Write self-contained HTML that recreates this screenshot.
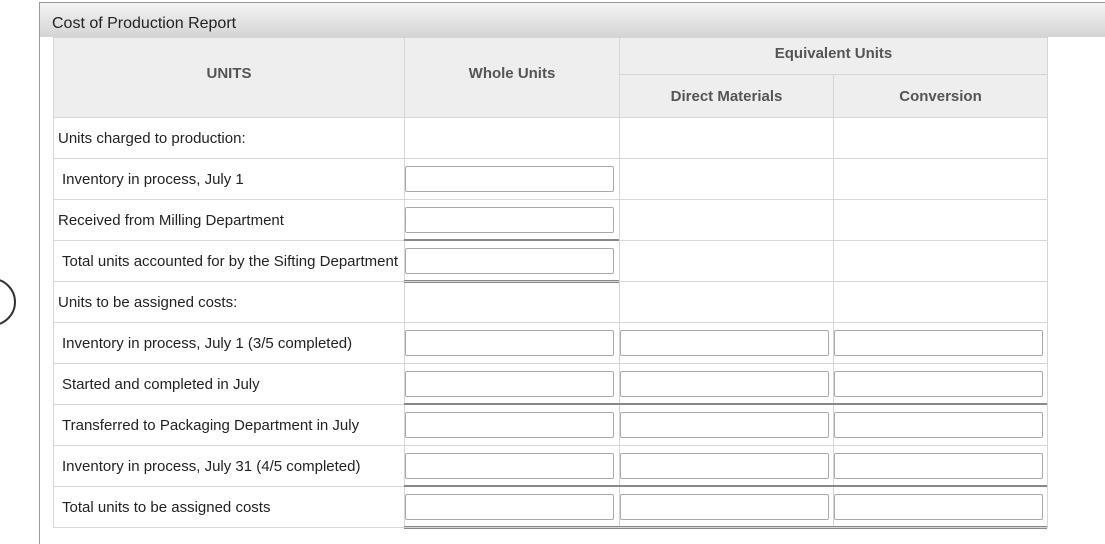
<!DOCTYPE html>
<html><head><style>
html,body{margin:0;width:1105px;height:544px;background:#fff;position:relative;overflow:hidden;font-family:"Liberation Sans",Arial,sans-serif;}
.outer{position:absolute;left:39px;top:2px;width:1070px;height:560px;border-left:1px solid #999;border-top:1px solid #999;}
.bar{position:absolute;left:40px;top:3px;width:1070px;height:34px;background:linear-gradient(#f4f4f4,#d4d4d4);}
.bar span{position:absolute;left:12px;top:12px;font-size:16px;color:#222;}
table{position:absolute;left:53px;top:37px;border-collapse:collapse;table-layout:fixed;}
td,th{border:1px solid #d6d6d6;padding:0;font-size:15px;color:#222;}
th{background:#eee;color:#555;font-weight:bold;}
td.l{padding-left:4px;white-space:nowrap;}
td.i{padding-left:8px;}
tr.b td{height:40px;}
.in{display:block;width:207px;height:24px;border:1px solid #aaa;border-radius:2px;background:#fff;}
.ln{position:absolute;height:2px;background:#888;}
.circ{position:absolute;left:-32px;top:278px;width:44px;height:44px;border:2.5px solid #333;border-radius:50%;}
</style></head><body>
<div class="circ"></div>
<div class="outer"></div>
<div class="bar"><span>Cost of Production Report</span></div>
<table>
<colgroup><col style="width:351px"><col style="width:215px"><col style="width:214px"><col style="width:214px"></colgroup>
<tr style="height:37px"><th rowspan="2" style="padding-bottom:8px">UNITS</th><th rowspan="2" style="padding-bottom:8px">Whole Units</th><th colspan="2" style="padding-bottom:6px">Equivalent Units</th></tr>
<tr style="height:43px"><th>Direct Materials</th><th>Conversion</th></tr>
<tr class="b"><td class="l">Units charged to production:</td><td></td><td></td><td></td></tr>
<tr class="b"><td class="l i">Inventory in process, July 1</td><td><span class="in"></span></td><td></td><td></td></tr>
<tr class="b"><td class="l">Received from Milling Department</td><td><span class="in"></span></td><td></td><td></td></tr>
<tr class="b"><td class="l i">Total units accounted for by the Sifting Department</td><td><span class="in"></span></td><td></td><td></td></tr>
<tr class="b"><td class="l">Units to be assigned costs:</td><td></td><td></td><td></td></tr>
<tr class="b"><td class="l i">Inventory in process, July 1 (3/5 completed)</td><td><span class="in"></span></td><td><span class="in"></span></td><td><span class="in"></span></td></tr>
<tr class="b"><td class="l i">Started and completed in July</td><td><span class="in"></span></td><td><span class="in"></span></td><td><span class="in"></span></td></tr>
<tr class="b"><td class="l i">Transferred to Packaging Department in July</td><td><span class="in"></span></td><td><span class="in"></span></td><td><span class="in"></span></td></tr>
<tr class="b"><td class="l i">Inventory in process, July 31 (4/5 completed)</td><td><span class="in"></span></td><td><span class="in"></span></td><td><span class="in"></span></td></tr>
<tr class="b"><td class="l i">Total units to be assigned costs</td><td><span class="in"></span></td><td><span class="in"></span></td><td><span class="in"></span></td></tr>
</table>
<div class="ln" style="left:404px;top:239px;width:215px"></div>
<div class="ln" style="left:404px;top:280px;width:215px;height:1px"></div>
<div class="ln" style="left:404px;top:282px;width:215px;height:1px"></div>
<div class="ln" style="left:404px;top:403px;width:643px"></div>
<div class="ln" style="left:404px;top:485px;width:643px"></div>
<div class="ln" style="left:404px;top:526px;width:643px;height:1px"></div>
<div class="ln" style="left:404px;top:528px;width:643px;height:1px"></div>
</body></html>
